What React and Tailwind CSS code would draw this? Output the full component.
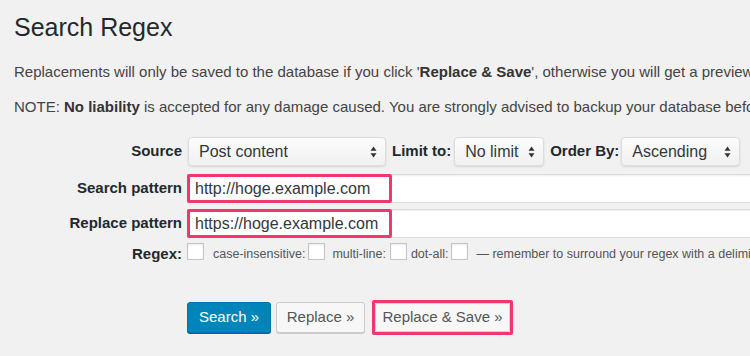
import { useState } from 'react'

// ── Select with mac-style up/down arrows ─────────────
function Select({ value, className }) {
  return (
    <div
      className={`relative h-[29px] flex items-center pl-[10px] pr-[20px] rounded-[4px] border border-[#dcdcdc] bg-gradient-to-b from-[#fcfcfc] to-[#f1f1f1] shadow-[0_1px_2px_rgba(0,0,0,0.12)] text-[16px] text-[#32373c] ${className}`}
    >
      <span className="truncate">{value}</span>
      <svg
        width="7"
        height="12"
        viewBox="0 0 7 12"
        className="absolute right-[8px] top-1/2 -translate-y-1/2"
      >
        <path d="M3.5 0.5 L6.5 4.8 L0.5 4.8 Z" fill="#333" />
        <path d="M3.5 11.5 L6.5 7.2 L0.5 7.2 Z" fill="#333" />
      </svg>
    </div>
  )
}

function Checkbox() {
  return (
    <span className="inline-block w-[17px] h-[17px] bg-white border border-[#c3c6c9] shadow-[inset_0_1px_2px_rgba(0,0,0,0.08)] shrink-0" />
  )
}

// ── Text input with the pink annotation box ─────────
function PatternInput({ value }) {
  const [v, setV] = useState(value)
  return (
    <div className="relative flex-1 h-[29px]">
      <input
        value={v}
        onChange={(e) => setV(e.target.value)}
        className="w-full h-full bg-white border border-[#dcdcdc] shadow-[inset_0_1px_2px_rgba(0,0,0,0.07)] pl-[7px] text-[16px] text-[#32373c] outline-none"
      />
      <div className="absolute left-0 top-0 bottom-0 w-[205px] border-[3px] border-[#f0386f] rounded-[2px] pointer-events-none" />
    </div>
  )
}

export default function App() {
  return (
    <div className="w-[750px] h-[356px] overflow-hidden bg-[#f1f1f1] text-[#444] font-['Liberation_Sans',Arial,sans-serif] whitespace-nowrap">
      <h1 className="ml-[14px] mt-[11px] text-[25px] leading-[33px] text-[#23282d]">Search Regex</h1>

      <p className="ml-[14px] mt-[18px] text-[15px] leading-[20px]">
        Replacements will only be saved to the database if you click '<b className="text-[#333]">Replace &amp; Save</b>', otherwise you will get a preview of the results.
      </p>
      <p className="ml-[14px] mt-[15px] text-[15px] leading-[20px]">
        NOTE: <b className="text-[#333]">No liability</b> is accepted for any damage caused. You are strongly advised to backup your database before making any changes.
      </p>

      <div className="w-[1000px] text-[15px]">
        {/* Source / limit / order */}
        <div className="mt-[20px] flex items-center h-[29px]">
          <div className="w-[182px] text-right font-bold text-[#23282d]">Source</div>
          <Select value="Post content" className="ml-[6px] w-[198px]" />
          <div className="ml-[6px] font-bold text-[#23282d]">Limit to:</div>
          <Select value="No limit" className="ml-[3px] w-[90px]" />
          <div className="ml-[6px] font-bold text-[#23282d]">Order By:</div>
          <Select value="Ascending" className="ml-[2px] w-[119px]" />
        </div>

        <div className="mt-[8px] flex items-center">
          <div className="w-[182px] text-right font-bold text-[#23282d]">Search pattern</div>
          <div className="ml-[5px] flex-1 flex">
            <PatternInput value="http://hoge.example.com" />
          </div>
        </div>

        <div className="mt-[6px] flex items-center">
          <div className="w-[182px] text-right font-bold text-[#23282d]">Replace pattern</div>
          <div className="ml-[5px] flex-1 flex">
            <PatternInput value="https://hoge.example.com" />
          </div>
        </div>

        <div className="mt-[8px] flex items-center h-[17px]">
          <div className="w-[182px] text-right font-bold text-[#23282d]">Regex:</div>
          <span className="ml-[5px]"><Checkbox /></span>
          <span className="ml-[9px] text-[12.5px] text-[#555]">case-insensitive:</span>
          <span className="ml-[3px]"><Checkbox /></span>
          <span className="ml-[7px] text-[12.5px] text-[#555]">multi-line:</span>
          <span className="ml-[4px]"><Checkbox /></span>
          <span className="ml-[4px] text-[12.5px] text-[#555]">dot-all:</span>
          <span className="ml-[3px]"><Checkbox /></span>
          <span className="ml-[8px] text-[12.5px] text-[#555]">— remember to surround your regex with a delimiter!</span>
        </div>

        <div className="mt-[39px] ml-[187px] flex items-center">
          <button className="h-[31px] w-[84px] rounded-[3px] bg-[#0085ba] border border-[#0073aa] shadow-[0_1px_0_#006799] text-white text-[15px]">
            Search »
          </button>
          <button className="ml-[5px] h-[31px] w-[89px] rounded-[3px] bg-[#f7f7f7] border border-[#cccccc] shadow-[0_1px_0_#cccccc] text-[#555] text-[15px]">
            Replace »
          </button>
          <div className="ml-[7px] border-[3px] border-[#f0386f] rounded-[2px] -my-[2px]">
            <button className="h-[29px] w-[135px] rounded-[2px] bg-[#f7f7f7] border border-[#d4d4d4] text-[#555] text-[15px] flex items-center justify-center">
              Replace &amp; Save »
            </button>
          </div>
        </div>
      </div>
    </div>
  )
}
